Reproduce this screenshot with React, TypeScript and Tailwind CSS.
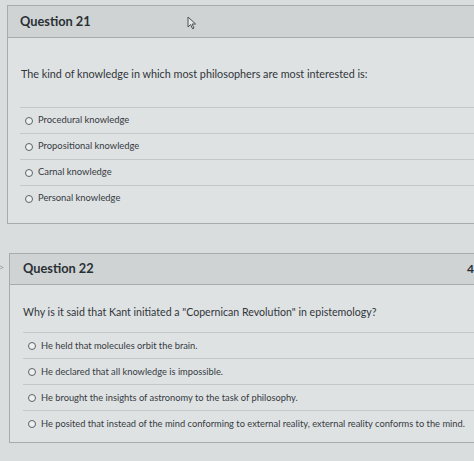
const FONT = { fontFamily: "Lato, 'Open Sans', sans-serif" };

const q21 = ['Procedural knowledge', 'Propositional knowledge', 'Carnal knowledge', 'Personal knowledge'];
const q22 = [
  'He held that molecules orbit the brain.',
  'He declared that all knowledge is impossible.',
  'He brought the insights of astronomy to the task of philosophy.',
  'He posited that instead of the mind conforming to external reality, external reality conforms to the mind.',
];

function Cursor() {
  return (
    <svg width="10" height="14" viewBox="0 0 10 14" className="ml-[96px] mt-[3px]">
      <path d="M1 1 L1 11 L3.6 8.6 L5.6 12.8 L7 12.1 L5.1 8 L8.6 8 Z" fill="#e6e9ea" stroke="#4a5054" strokeWidth="1" strokeLinejoin="round" />
    </svg>
  );
}

function Option({ label, size }: { label: string; size: string }) {
  return (
    <div className="flex h-[26px] items-center gap-[5px] border-t border-[#c4c8c9] pl-[5px]">
      <span className="h-[8px] w-[8px] shrink-0 rounded-full border border-[#5b6266] bg-[#eef0f0]" />
      <span className={`whitespace-nowrap text-[#353b3f] ${size}`}>{label}</span>
    </div>
  );
}

export default function App() {
  return (
    <div className="relative h-[461px] w-[474px] overflow-hidden bg-[#dadddd] text-[#30363a]" style={FONT}>
      {/* Question 21 */}
      <div className="ml-[7px] mr-[-20px] mt-[5px] border border-[#a7abac] bg-[#dfe2e3]">
        <div className="flex h-[32px] items-center border-b border-[#a7abac] bg-[#cfd3d4] pl-[12px]">
          <span className="text-[12.8px] font-bold text-[#2a3034]">Question 21</span>
          <Cursor />
        </div>
        <div className="pb-[12px] pl-[13px] pt-[29px]">
          <p className="mb-[26px] text-[10.8px] leading-[14px]">
            The kind of knowledge in which most philosophers are most interested is:
          </p>
          <div className="-ml-[1px]">
            {q21.map((o) => (
              <Option key={o} label={o} size="text-[9.4px]" />
            ))}
          </div>
        </div>
      </div>

      {/* Question 22 */}
      <div className="flex">
        <span className="-ml-[4px] mt-[35px] w-[13px] text-[10px] text-[#8a8f92]">▷</span>
        <div className="mr-[-30px] mt-[29px] flex-1 border border-[#a7abac] bg-[#dfe2e3]">
          <div className="flex h-[31px] items-center border-b border-[#a7abac] bg-[#cfd3d4] pl-[13px]">
            <span className="text-[12.8px] font-bold text-[#2a3034]">Question 22</span>
            <span className="ml-auto mr-[29px] text-[12px] font-bold text-[#2a3034]">4</span>
          </div>
          <div className="pb-[6px] pl-[13px] pt-[20px]">
            <p className="mb-[13px] text-[10.6px] leading-[14px]">
              Why is it said that Kant initiated a "Copernican Revolution" in epistemology?
            </p>
            <div>
              {q22.map((o) => (
                <Option key={o} label={o} size="text-[9.3px]" />
              ))}
            </div>
          </div>
        </div>
      </div>
    </div>
  );
}
